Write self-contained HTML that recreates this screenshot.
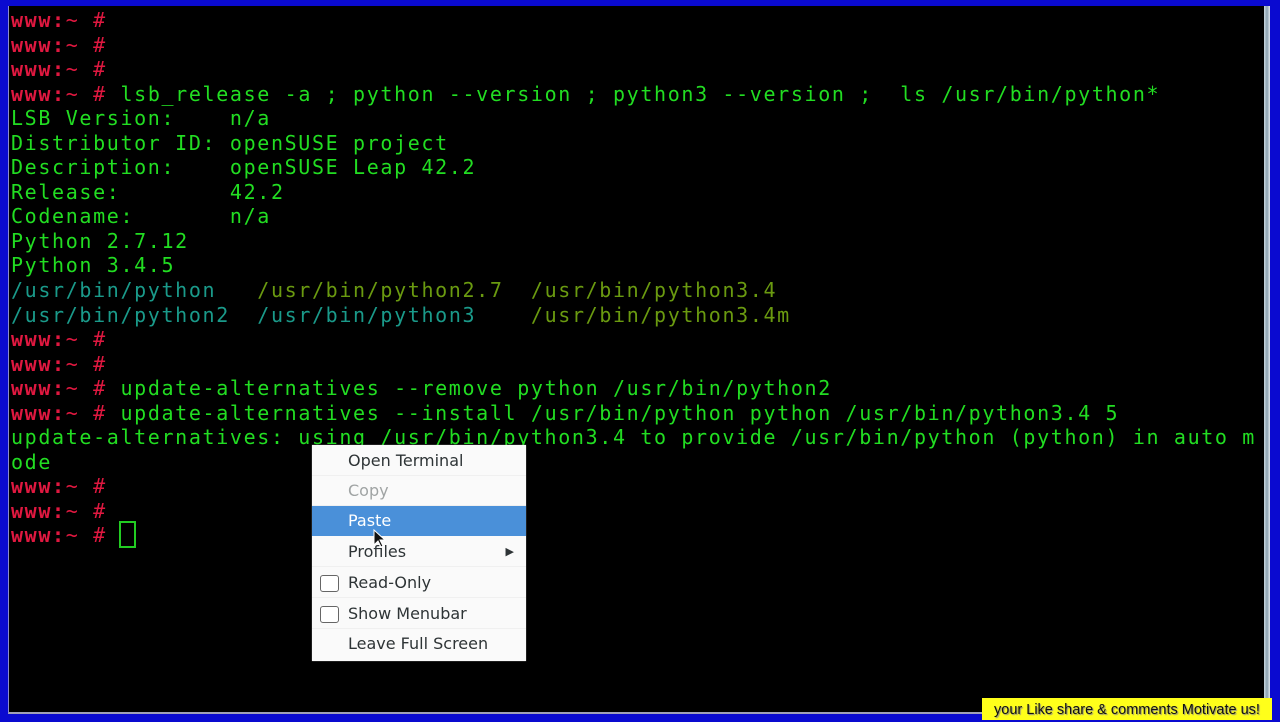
<!DOCTYPE html><html><head><style>
body{margin:0;width:1280px;height:720px;background:#0a0ad0;position:relative;overflow:hidden}
#term{position:absolute;left:8px;top:6px;width:1256px;height:706px;background:#000;border-left:1px solid #8a8ad0;border-bottom:2px solid #a0a0b8}
#sb{position:absolute;left:1264px;top:6px;width:6px;height:706px;background:linear-gradient(90deg,#c8d8e0,#8aa0b0,#dfe8ee)}
pre{position:absolute;left:11px;top:8px;margin:0;font-family:"DejaVu Sans Mono","Liberation Mono",monospace;font-size:20px;letter-spacing:1.64px;line-height:24.55px;color:#22dd22}
.r{color:#e01840}.r b{font-weight:bold}
.t{color:#1a9a8a}.o{color:#6a9a10}
#cur{position:absolute;left:119px;top:521px;width:17px;height:27px;border:2px solid #22cc22;box-sizing:border-box}
#menu{position:absolute;left:312px;top:445px;width:214px;height:216px;background:#fafafa;font-family:"DejaVu Sans","Liberation Sans",sans-serif;font-size:16px;color:#2e3436;box-shadow:0 0 1px #999}
.it{position:absolute;left:0;width:214px;height:30px;line-height:30px;padding-left:36px;box-sizing:border-box;border-bottom:1px solid #f0f0f0}
.cb{position:absolute;left:8px;top:7px;width:19px;height:17px;border:1px solid #666;border-radius:3px;box-sizing:border-box;background:#fff}
#tag{position:absolute;left:982px;top:698px;width:290px;height:22px;background:#ffff1a;font-family:"Liberation Sans",sans-serif;font-size:14.5px;text-align:center;line-height:24px;color:#111;text-shadow:1px 1px 1px #888}
</style></head><body>
<div id="term"></div><div id="sb"></div>
<pre><span class="r"><b>www:</b>~ #</span>
<span class="r"><b>www:</b>~ #</span>
<span class="r"><b>www:</b>~ #</span>
<span class="r"><b>www:</b>~ #</span> lsb_release -a ; python --version ; python3 --version ;  ls /usr/bin/python*
LSB Version:    n/a
Distributor ID: openSUSE project
Description:    openSUSE Leap 42.2
Release:        42.2
Codename:       n/a
Python 2.7.12
Python 3.4.5
<span class="t">/usr/bin/python</span>   <span class="o">/usr/bin/python2.7</span>  <span class="o">/usr/bin/python3.4</span>
<span class="t">/usr/bin/python2</span>  <span class="t">/usr/bin/python3</span>    <span class="o">/usr/bin/python3.4m</span>
<span class="r"><b>www:</b>~ #</span>
<span class="r"><b>www:</b>~ #</span>
<span class="r"><b>www:</b>~ #</span> update-alternatives --remove python /usr/bin/python2
<span class="r"><b>www:</b>~ #</span> update-alternatives --install /usr/bin/python python /usr/bin/python3.4 5
update-alternatives: using /usr/bin/python3.4 to provide /usr/bin/python (python) in auto m
ode
<span class="r"><b>www:</b>~ #</span>
<span class="r"><b>www:</b>~ #</span>
<span class="r"><b>www:</b>~ #</span></pre>
<div id="cur"></div>
<div id="menu">
<div class="it" style="top:1px">Open Terminal</div>
<div class="it" style="top:31px;color:#a0a4a4">Copy</div>
<div class="it" style="top:61px;background:#4a90d9;color:#fff;border:none">Paste</div>
<div class="it" style="top:92px">Profiles<span style="position:absolute;right:12px;top:0;font-size:11px">&#9654;</span></div>
<div class="it" style="top:123px"><span class="cb"></span>Read-Only</div>
<div class="it" style="top:154px"><span class="cb"></span>Show Menubar</div>
<div class="it" style="top:184px;border:none">Leave Full Screen</div>
</div>
<svg style="position:absolute;left:373px;top:529px" width="14" height="20" viewBox="0 0 14 20"><path d="M1 1 L1 16 L5 12 L8 18 L10 17 L7 11 L12 11 Z" fill="#111" stroke="#fff" stroke-width="1"/></svg>
<div id="tag">your Like share &amp; comments Motivate us!</div>
</body></html>
